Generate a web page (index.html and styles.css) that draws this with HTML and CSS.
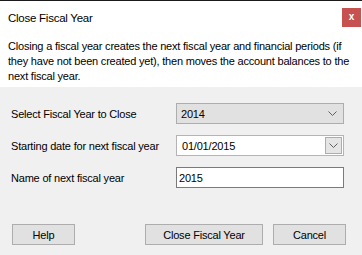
FILE: index.html
```html
<!DOCTYPE html>
<html>
<head>
<meta charset="utf-8">
<link rel="stylesheet" href="styles.css">
</head>
<body>
<div class="dialog">
  <div class="header">
    <div class="title-row">
      <span class="title">Close Fiscal Year</span>
      <span class="close-btn">x</span>
    </div>
    <p class="desc">Closing a fiscal year creates the next fiscal year and financial periods (if they have not been created yet), then moves the account balances to the next fiscal year.</p>
  </div>
  <div class="body">
    <div class="rows">
      <div class="row">
        <span class="label">Select Fiscal Year to Close</span>
        <div class="combo">
          <span class="combo-text">2014</span>
          <svg class="chev" width="9" height="5" viewBox="0 0 9 5"><path d="M0.5 0.5 L4.5 4.5 L8.5 0.5" fill="none" stroke="#606060" stroke-width="1"/></svg>
        </div>
      </div>
      <div class="row">
        <span class="label">Starting date for next fiscal year</span>
        <div class="datebox">
          <span class="date-text">01/01/2015</span>
          <span class="date-btn"><svg width="9" height="5" viewBox="0 0 9 5"><path d="M0.5 0.5 L4.5 4.5 L8.5 0.5" fill="none" stroke="#606060" stroke-width="1"/></svg></span>
        </div>
      </div>
      <div class="row">
        <span class="label">Name of next fiscal year</span>
        <div class="textbox">2015</div>
      </div>
    </div>
    <div class="buttons">
      <span class="btn btn-help">Help</span>
      <span class="spacer"></span>
      <span class="btn btn-close">Close Fiscal Year</span>
      <span class="btn btn-cancel">Cancel</span>
    </div>
  </div>
</div>
</body>
</html>
```
FILE: styles.css
```css
html, body {
  margin: 0;
  padding: 0;
}
body {
  width: 362px;
  height: 255px;
  overflow: hidden;
  background: #f0f0f0;
  font-family: "Liberation Sans", Arial, sans-serif;
  font-size: 11px;
  letter-spacing: -0.2px;
  color: #000;
}
.dialog {
  border-top: 1px solid #1a1a1a;
  display: flex;
  flex-direction: column;
  height: 254px;
}
.header {
  background: #fff;
  height: 86px;
  box-sizing: border-box;
  padding: 7px 1px 0 8px;
}
.title-row {
  display: flex;
  justify-content: space-between;
  align-items: center;
  height: 19px;
}
.title {
  font-size: 11.5px;
  letter-spacing: -0.25px;
  padding-top: 1px;
}
.close-btn {
  width: 19px;
  height: 19px;
  background: #c75050;
  color: #fff;
  font-weight: bold;
  font-size: 10px;
  letter-spacing: 0;
  display: flex;
  align-items: center;
  justify-content: center;
  box-sizing: border-box;
  padding-bottom: 2px;
}
.desc {
  margin: 12px 0 0 0;
  line-height: 15px;
  width: 345px;
}
.body {
  flex: 1;
  display: flex;
  flex-direction: column;
  padding: 16px 0 0 0;
}
.rows {
  display: flex;
  flex-direction: column;
  gap: 11px;
}
.row {
  display: flex;
  align-items: center;
  height: 21px;
}
.label {
  width: 165px;
  padding-left: 11px;
}
.combo {
  width: 168px;
  height: 21px;
  box-sizing: border-box;
  border: 1px solid #adadad;
  background: #e1e1e1;
  display: flex;
  align-items: center;
  justify-content: space-between;
  padding: 0 6px 0 4px;
}
.chev {
  display: block;
}
.datebox {
  width: 168px;
  height: 21px;
  box-sizing: border-box;
  border: 1px solid #b4b4b4;
  background: #fff;
  display: flex;
  align-items: center;
  justify-content: space-between;
  padding: 0 1px 0 5px;
}
.date-btn {
  width: 17px;
  height: 17px;
  box-sizing: border-box;
  border: 1px solid #adadad;
  background: #e5e5e5;
  display: flex;
  align-items: center;
  justify-content: center;
}
.textbox {
  width: 168px;
  height: 21px;
  box-sizing: border-box;
  border: 1px solid #7a7a7a;
  background: #fff;
  display: flex;
  align-items: center;
  padding: 0 2px;
}
.buttons {
  display: flex;
  align-items: center;
  margin-top: 36px;
  padding-left: 12px;
}
.btn {
  height: 21px;
  box-sizing: border-box;
  border: 1px solid #adadad;
  background: #e1e1e1;
  display: flex;
  align-items: center;
  justify-content: center;
}
.btn-help {
  width: 63px;
}
.spacer {
  width: 70px;
}
.btn-close {
  width: 118px;
  margin-right: 10px;
}
.btn-cancel {
  width: 73px;
}
```
